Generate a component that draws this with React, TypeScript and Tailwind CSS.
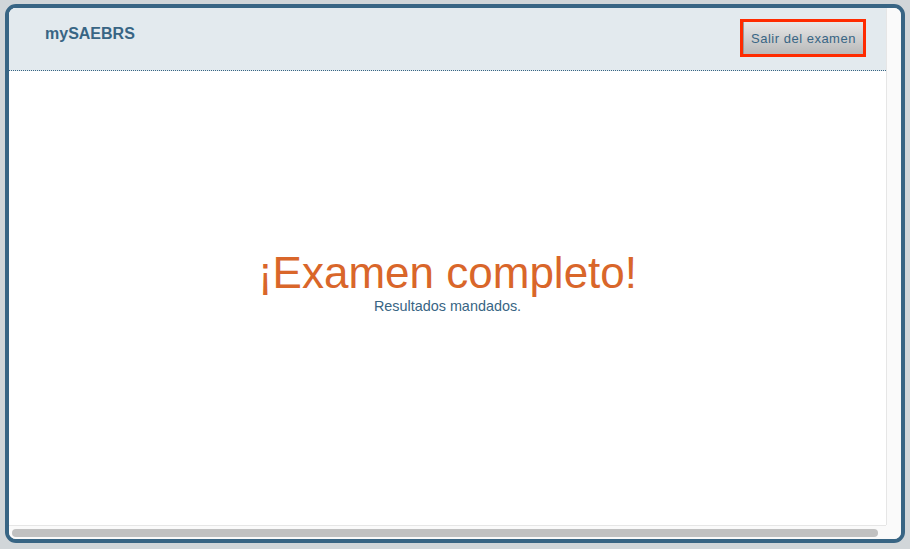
export default function App() {
  return (
    <div
      className="w-[910px] h-[549px] bg-[#d1d6d9] pl-[5px] pt-[4px]"
      style={{ fontFamily: '"Liberation Sans", Arial, sans-serif' }}
    >
      <div className="w-[900px] h-[539px] border-4 border-[#386584] rounded-[11px] overflow-hidden bg-[#fafafa] grid grid-cols-[877px_15px] grid-rows-[517px_14px]">
        <div className="flex flex-col bg-white">
          <div className="h-[63px] shrink-0 bg-[#e3eaee] border-b border-dotted border-[#386584] flex items-start justify-between">
            <div className="ml-[36px] mt-[17px] text-[16px] leading-[18px] font-bold text-[#386584]">
              mySAEBRS
            </div>
            <div className="mt-[11px] mr-[20px] border-[3px] border-[#ff2b00]">
              <button className="h-[32px] w-[120px] border-l border-[#9a9a9a] bg-gradient-to-b from-[#e8e8e8] to-[#b9b9b9] text-[13px] tracking-[0.5px] text-[#386584] leading-none flex items-center justify-center">
                Salir del examen
              </button>
            </div>
          </div>
          <div className="flex-1 flex flex-col items-center pt-[180px]">
            <div className="text-[44px] leading-[44px] text-[#d9662a]">¡Examen completo!</div>
            <div className="mt-[3px] text-[14.4px] leading-[16px] text-[#386584]">Resultados mandados.</div>
          </div>
        </div>
        <div className="border-l border-[#e6e6e6] bg-[#fafafa]"></div>
        <div className="border-t border-[#e6e6e6] bg-[#fafafa] pt-[3px] pl-[3px] pr-[8px]">
          <div className="h-[8px] rounded-full bg-[#c1c1c1]"></div>
        </div>
        <div className="bg-[#fafafa]"></div>
      </div>
    </div>
  );
}
